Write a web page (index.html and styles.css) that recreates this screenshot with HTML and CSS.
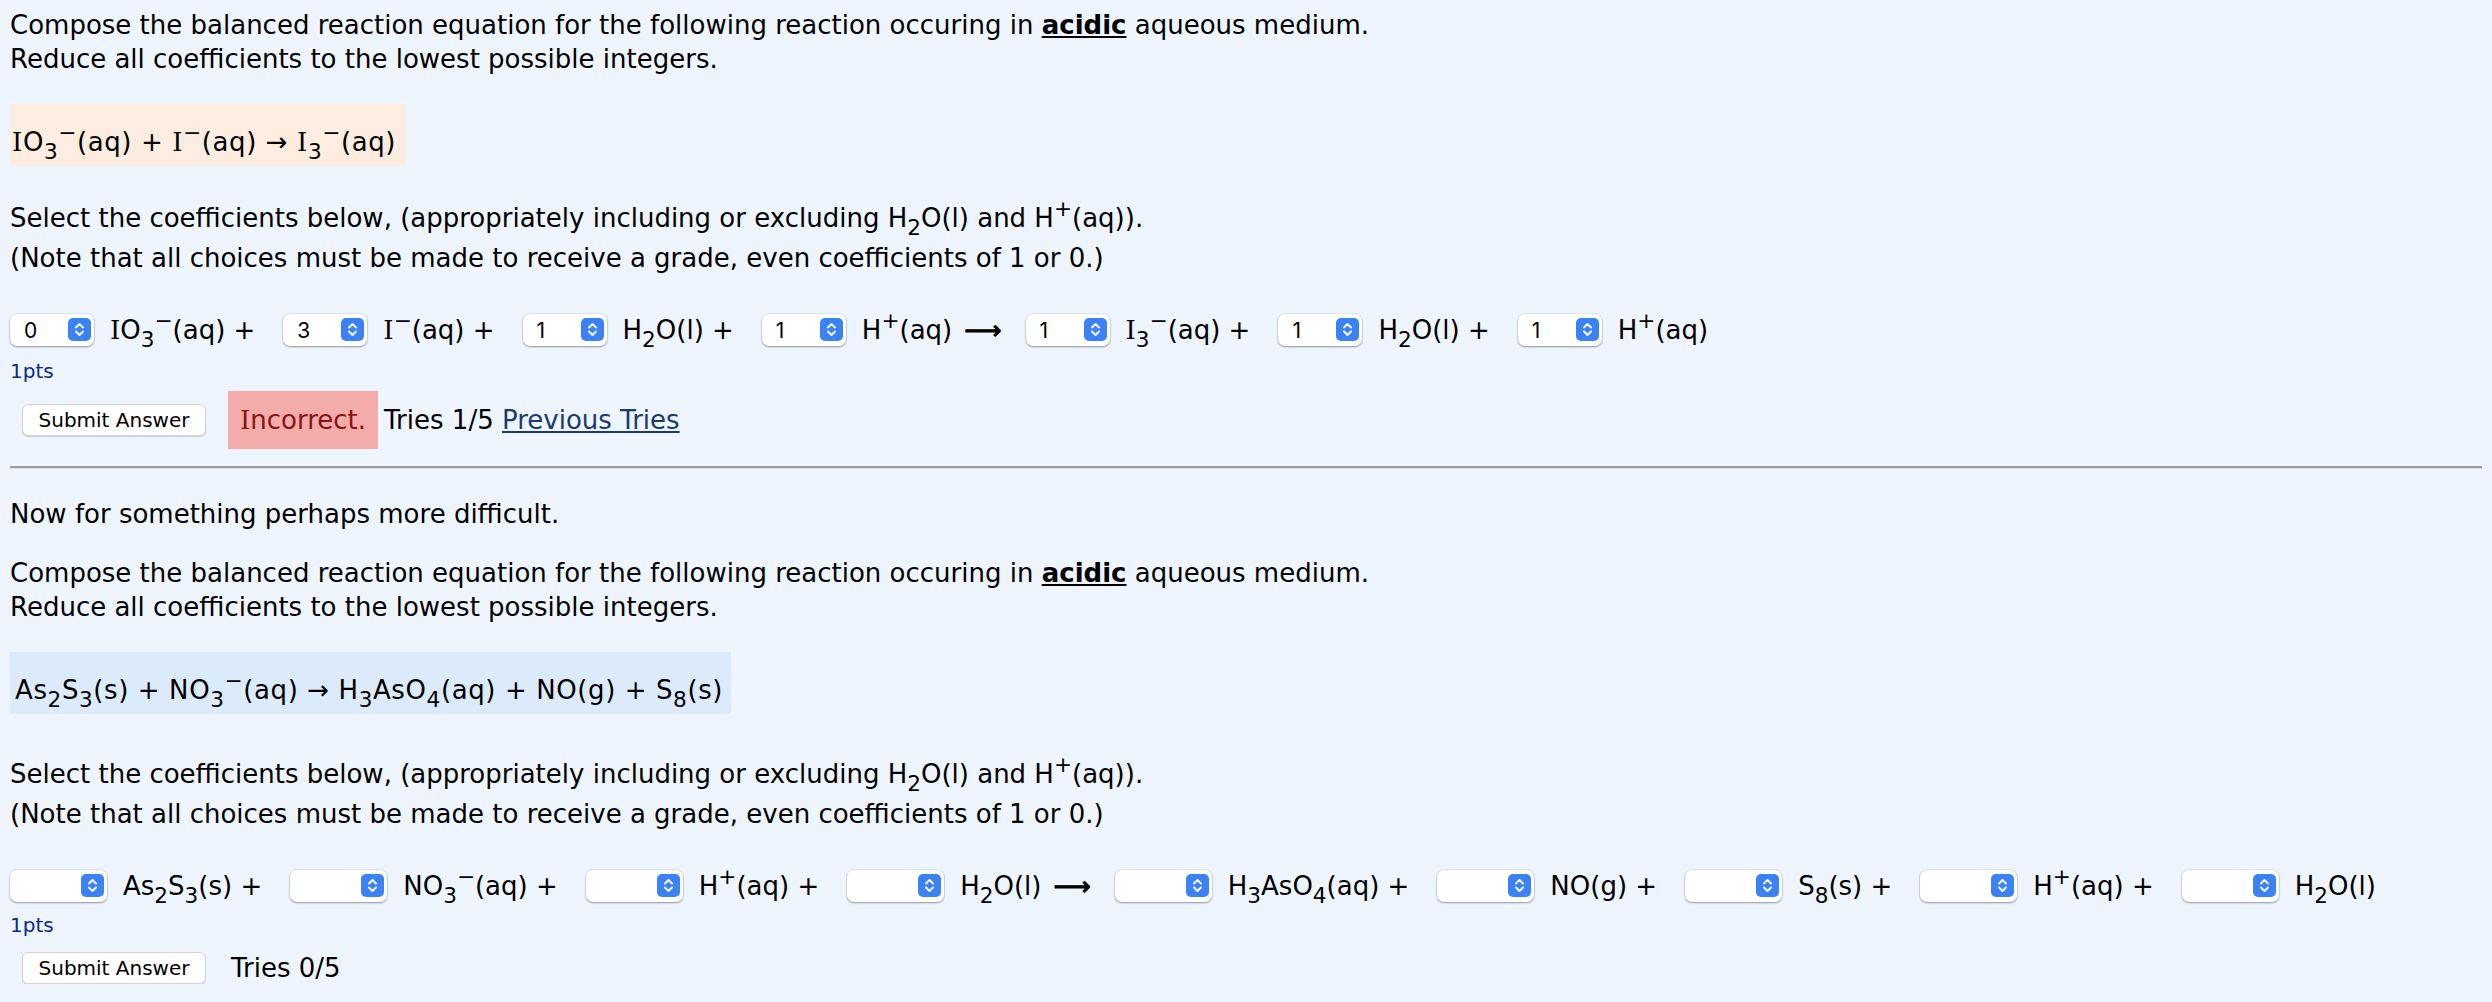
FILE: index.html
```html
<!DOCTYPE html>
<html lang="en">
<head>
<meta charset="utf-8">
<title>Balance the reaction</title>
<link rel="stylesheet" href="styles.css">
</head>
<body>
<section class="problem">
  <p class="intro">
    <span class="line">Compose the balanced reaction equation for the following reaction occuring in <b class="acid">acidic</b> aqueous medium.</span>
    <span class="line">Reduce all coefficients to the lowest possible integers.</span>
  </p>
  <div class="eq peach"><span class="ci">I</span>O<sub>3</sub><sup>−</sup>(aq) + <span class="ci">I</span><sup>−</sup>(aq) → <span class="ci">I</span><sub>3</sub><sup>−</sup>(aq)</div>
  <p class="select">
    <span class="line first">Select the coefficients below, (appropriately including or excluding H<sub>2</sub>O(l) and H<sup>+</sup>(aq)).</span>
    <span class="line">(Note that all choices must be made to receive a grade, even coefficients of 1 or 0.)</span>
  </p>
  <div class="row">
    <span class="sel"><select><option>0</option></select><svg class="stepper" viewBox="0 0 23 23"><rect width="23" height="23" rx="5" class="stp-bg"/><path d="M8 9.5 11.5 6 15 9.5M8 13.5 11.5 17 15 13.5" class="stp-ch"/></svg></span>
    <span class="term"><span class="ci">I</span>O<sub>3</sub><sup>−</sup>(aq) +</span>
    <span class="sel"><select><option>3</option></select><svg class="stepper" viewBox="0 0 23 23"><rect width="23" height="23" rx="5" class="stp-bg"/><path d="M8 9.5 11.5 6 15 9.5M8 13.5 11.5 17 15 13.5" class="stp-ch"/></svg></span>
    <span class="term"><span class="ci">I</span><sup>−</sup>(aq) +</span>
    <span class="sel"><select><option>1</option></select><svg class="stepper" viewBox="0 0 23 23"><rect width="23" height="23" rx="5" class="stp-bg"/><path d="M8 9.5 11.5 6 15 9.5M8 13.5 11.5 17 15 13.5" class="stp-ch"/></svg></span>
    <span class="term">H<sub>2</sub>O(l) +</span>
    <span class="sel"><select><option>1</option></select><svg class="stepper" viewBox="0 0 23 23"><rect width="23" height="23" rx="5" class="stp-bg"/><path d="M8 9.5 11.5 6 15 9.5M8 13.5 11.5 17 15 13.5" class="stp-ch"/></svg></span>
    <span class="term last">H<sup>+</sup>(aq)</span>
    <span class="arrow">⟶</span>
    <span class="sel"><select><option>1</option></select><svg class="stepper" viewBox="0 0 23 23"><rect width="23" height="23" rx="5" class="stp-bg"/><path d="M8 9.5 11.5 6 15 9.5M8 13.5 11.5 17 15 13.5" class="stp-ch"/></svg></span>
    <span class="term"><span class="ci">I</span><sub>3</sub><sup>−</sup>(aq) +</span>
    <span class="sel"><select><option>1</option></select><svg class="stepper" viewBox="0 0 23 23"><rect width="23" height="23" rx="5" class="stp-bg"/><path d="M8 9.5 11.5 6 15 9.5M8 13.5 11.5 17 15 13.5" class="stp-ch"/></svg></span>
    <span class="term">H<sub>2</sub>O(l) +</span>
    <span class="sel"><select><option>1</option></select><svg class="stepper" viewBox="0 0 23 23"><rect width="23" height="23" rx="5" class="stp-bg"/><path d="M8 9.5 11.5 6 15 9.5M8 13.5 11.5 17 15 13.5" class="stp-ch"/></svg></span>
    <span class="term last">H<sup>+</sup>(aq)</span>
  </div>
  <div class="pts">1pts</div>
  <div class="submit-row tall">
    <button class="submit" type="button">Submit Answer</button>
    <span class="incorrect"><span class="ci">I</span>ncorrect.</span>
    <span class="tries first-tries">Tries 1/5 <a href="#" class="prev">Previous Tries</a></span>
  </div>
</section>
<hr class="divider">
<section class="problem">
  <p class="now">Now for something perhaps more difficult.</p>
  <p class="intro second">
    <span class="line">Compose the balanced reaction equation for the following reaction occuring in <b class="acid">acidic</b> aqueous medium.</span>
    <span class="line">Reduce all coefficients to the lowest possible integers.</span>
  </p>
  <div class="eq blue">As<sub>2</sub>S<sub>3</sub>(s) + NO<sub>3</sub><sup>−</sup>(aq) → H<sub>3</sub>AsO<sub>4</sub>(aq) + NO(g) + S<sub>8</sub>(s)</div>
  <p class="select second">
    <span class="line first">Select the coefficients below, (appropriately including or excluding H<sub>2</sub>O(l) and H<sup>+</sup>(aq)).</span>
    <span class="line">(Note that all choices must be made to receive a grade, even coefficients of 1 or 0.)</span>
  </p>
  <div class="row">
    <span class="sel wide"><select><option></option></select><svg class="stepper" viewBox="0 0 23 23"><rect width="23" height="23" rx="5" class="stp-bg"/><path d="M8 9.5 11.5 6 15 9.5M8 13.5 11.5 17 15 13.5" class="stp-ch"/></svg></span>
    <span class="term">As<sub>2</sub>S<sub>3</sub>(s) +</span>
    <span class="sel wide"><select><option></option></select><svg class="stepper" viewBox="0 0 23 23"><rect width="23" height="23" rx="5" class="stp-bg"/><path d="M8 9.5 11.5 6 15 9.5M8 13.5 11.5 17 15 13.5" class="stp-ch"/></svg></span>
    <span class="term">NO<sub>3</sub><sup>−</sup>(aq) +</span>
    <span class="sel wide"><select><option></option></select><svg class="stepper" viewBox="0 0 23 23"><rect width="23" height="23" rx="5" class="stp-bg"/><path d="M8 9.5 11.5 6 15 9.5M8 13.5 11.5 17 15 13.5" class="stp-ch"/></svg></span>
    <span class="term">H<sup>+</sup>(aq) +</span>
    <span class="sel wide"><select><option></option></select><svg class="stepper" viewBox="0 0 23 23"><rect width="23" height="23" rx="5" class="stp-bg"/><path d="M8 9.5 11.5 6 15 9.5M8 13.5 11.5 17 15 13.5" class="stp-ch"/></svg></span>
    <span class="term last">H<sub>2</sub>O(l)</span>
    <span class="arrow">⟶</span>
    <span class="sel wide"><select><option></option></select><svg class="stepper" viewBox="0 0 23 23"><rect width="23" height="23" rx="5" class="stp-bg"/><path d="M8 9.5 11.5 6 15 9.5M8 13.5 11.5 17 15 13.5" class="stp-ch"/></svg></span>
    <span class="term">H<sub>3</sub>AsO<sub>4</sub>(aq) +</span>
    <span class="sel wide"><select><option></option></select><svg class="stepper" viewBox="0 0 23 23"><rect width="23" height="23" rx="5" class="stp-bg"/><path d="M8 9.5 11.5 6 15 9.5M8 13.5 11.5 17 15 13.5" class="stp-ch"/></svg></span>
    <span class="term">NO(g) +</span>
    <span class="sel wide"><select><option></option></select><svg class="stepper" viewBox="0 0 23 23"><rect width="23" height="23" rx="5" class="stp-bg"/><path d="M8 9.5 11.5 6 15 9.5M8 13.5 11.5 17 15 13.5" class="stp-ch"/></svg></span>
    <span class="term">S<sub>8</sub>(s) +</span>
    <span class="sel wide"><select><option></option></select><svg class="stepper" viewBox="0 0 23 23"><rect width="23" height="23" rx="5" class="stp-bg"/><path d="M8 9.5 11.5 6 15 9.5M8 13.5 11.5 17 15 13.5" class="stp-ch"/></svg></span>
    <span class="term">H<sup>+</sup>(aq) +</span>
    <span class="sel wide"><select><option></option></select><svg class="stepper" viewBox="0 0 23 23"><rect width="23" height="23" rx="5" class="stp-bg"/><path d="M8 9.5 11.5 6 15 9.5M8 13.5 11.5 17 15 13.5" class="stp-ch"/></svg></span>
    <span class="term last">H<sub>2</sub>O(l)</span>
  </div>
  <div class="pts second">1pts</div>
  <div class="submit-row second">
    <button class="submit" type="button">Submit Answer</button>
    <span class="tries">Tries 0/5</span>
  </div>
</section>
</body>
</html>
```
FILE: styles.css
```css
* { box-sizing: border-box; }
html, body { margin: 0; }
body {
  background: #eef5ff;
  color: #000;
  font-family: Verdana, "DejaVu Sans", sans-serif;
  font-size: 26px;
  line-height: 34px;
  padding: 8px 10px 0;
}
p { margin: 0; }
.line { display: block; white-space: nowrap; }
sub, sup { font-size: 0.83em; line-height: 0; }
sub { vertical-align: -8px; }
sup { vertical-align: 11px; }
.acid { font-weight: bold; text-decoration: underline; }
.ci { font-family: "DejaVu Serif", serif; }

.eq {
  width: fit-content;
  margin-top: 28px;
  padding: 21px 7px 7px 2px;
  height: 62px;
  white-space: nowrap;
  letter-spacing: 0.6px;
}
.peach { background: #fcede0; padding-right: 10px; }
.blue { background: #dcebfc; padding-left: 5px; padding-right: 8px; }

.select { margin-top: 35px; }
.select.second { margin-top: 43px; }
.select .first { margin-bottom: 6px; }

.row {
  margin-top: 39px;
  height: 32px;
  display: flex;
  align-items: center;
  white-space: nowrap;
}
.sel {
  position: relative;
  display: block;
  flex: none;
  width: 84px;
  height: 32px;
  margin-right: 16px;
}
.sel.wide { width: 97px; }
.sel select {
  -webkit-appearance: none;
  appearance: none;
  display: block;
  width: 100%;
  height: 100%;
  margin: 0;
  border: none;
  border-radius: 7px;
  background: #fff;
  box-shadow: 0 0 0 1px rgba(0, 0, 0, 0.06), 0 1px 2px rgba(0, 0, 0, 0.35);
  font: 400 21px Inter, "Liberation Sans", sans-serif;
  color: #000;
  padding: 0 0 0 14px;
}
.stepper {
  position: absolute;
  right: 3px;
  top: 4px;
  width: 23px;
  height: 23px;
  pointer-events: none;
}
.stp-bg { fill: #3b82f6; }
.stp-ch { fill: none; stroke: #fff; stroke-width: 1.9; stroke-linecap: round; stroke-linejoin: round; }
.term { margin-right: 28px; }
.term.last { margin-right: 0; }
.arrow { margin: 0 24px 0 12px; -webkit-text-stroke: 0.9px #000; }

.pts {
  margin-top: 13px;
  font-size: 20px;
  line-height: 24px;
  color: #0b2a86;
}
.pts.second { margin-top: 11px; }

.submit-row {
  margin-top: 8px;
  display: flex;
  align-items: center;
  white-space: nowrap;
}
.submit-row.tall { height: 58px; }
.submit-row.second { margin-top: 15px; height: 32px; }
.submit {
  margin: 0 0 0 12px;
  width: 184px;
  height: 32px;
  background: #fff;
  border: 1px solid #d2d2d2;
  border-radius: 6px;
  box-shadow: 0 1px 1px rgba(0, 0, 0, 0.15);
  font-family: Verdana, "DejaVu Sans", sans-serif;
  font-size: 20px;
  color: #000;
  padding: 0;
}
.incorrect {
  margin-left: 22px;
  height: 58px;
  line-height: 58px;
  padding: 0 12px;
  background: #f3acaa;
  color: #8a1414;
}
.tries { margin-left: 25px; }
.first-tries { margin-left: 6px; }
.prev { color: #1b3b70; text-decoration: underline; }

.divider {
  margin: 17px 0 0;
  height: 3px;
  border: none;
  border-top: 2px solid #9b9b9b;
  border-bottom: 1px solid #dcdcdc;
}
.now { margin-top: 28px; }
.intro.second { margin-top: 25px; }
```
